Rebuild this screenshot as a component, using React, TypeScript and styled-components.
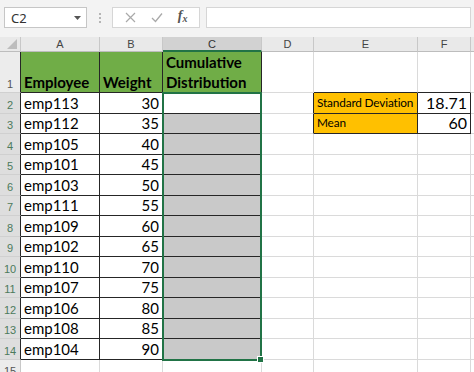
import React from 'react';
import styled, { createGlobalStyle } from 'styled-components';

const Global = createGlobalStyle`
  html, body { margin: 0; padding: 0; background: #fff; overflow: hidden; }
  #root { width: 474px; height: 372px; }
`;

const Page = styled.div`
  width: 474px;
  height: 372px;
  overflow: hidden;
  display: flex;
  flex-direction: column;
  background: #fff;
`;

const Toolbar = styled.div`
  height: 37px;
  flex: none;
  box-sizing: border-box;
  background: #f3f3f3;
  display: flex;
  align-items: flex-start;
  padding: 7px 3px 0 4px;
`;

const NameBox = styled.div`
  width: 83px;
  height: 21px;
  box-sizing: border-box;
  border: 1px solid #c6c6c6;
  background: #fff;
  display: flex;
  align-items: center;
  justify-content: space-between;
  padding: 0 5px 0 6px;
  font: 13px "Noto Sans", "DejaVu Sans", sans-serif;
  color: #333;
`;

const Grip = styled.div`
  width: 25px;
  height: 21px;
  display: flex;
  flex-direction: column;
  align-items: center;
  justify-content: center;
  gap: 2px;
  & > span {
    width: 2px;
    height: 2px;
    background: #b5b5b5;
  }
`;

const FxBox = styled.div`
  width: 88px;
  height: 21px;
  box-sizing: border-box;
  border: 1px solid #d6d6d6;
  background: #fff;
  display: flex;
  align-items: center;
  justify-content: space-around;
  padding: 0 4px;
`;

const FxLabel = styled.span`
  font: italic 600 14px "Liberation Serif", serif;
  color: #555;
  line-height: 14px;
  & > sub {
    font-size: 10px;
    vertical-align: -2px;
  }
`;

const FormulaInput = styled.div`
  flex: 1;
  height: 21px;
  margin-left: 6px;
  box-sizing: border-box;
  border: 1px solid #d6d6d6;
  background: #fff;
`;

const Sheet = styled.div`
  display: grid;
  grid-template-columns: 21px 79px 63px 99px 52px 104px 53px 1fr;
  grid-template-rows: 15px 41px repeat(14, 20.5px);
`;

type Pos = { $r: number; $c: number };

const Placed = styled.div<Pos>`
  grid-row: ${p => p.$r};
  grid-column: ${p => p.$c};
  box-sizing: border-box;
  min-width: 0;
`;

const Corner = styled(Placed)`
  background: #e9e9e9;
  border-right: 1px solid #c8c8c8;
  border-bottom: 1px solid #bdbdbd;
  display: flex;
  align-items: flex-end;
  justify-content: flex-end;
  padding: 0 3px 2px 0;
`;

const ColHead = styled(Placed)<{ $active?: boolean; $last?: boolean }>`
  background: ${p => (p.$active ? '#d2d2d2' : '#e9e9e9')};
  border-right: 1px solid ${p => (p.$last ? 'transparent' : '#c8c8c8')};
  border-bottom: ${p => (p.$active ? '2px solid #217346' : '1px solid #bdbdbd')};
  display: flex;
  align-items: center;
  justify-content: center;
  font: 11px "Liberation Sans", Arial, sans-serif;
  color: ${p => (p.$active ? '#333' : '#444')};
`;

const RowHead = styled(Placed)<{ $active?: boolean; $rb: string }>`
  background: ${p => (p.$active ? '#dedede' : '#ececec')};
  border-right: 1px solid ${p => p.$rb};
  border-bottom: 1px solid #d0d0d0;
  display: flex;
  align-items: flex-end;
  justify-content: center;
  padding-bottom: 2px;
  font: 11px "Liberation Sans", Arial, sans-serif;
  color: ${p => (p.$active ? '#4c7a5c' : '#555')};
`;

const Cell = styled(Placed)<{
  $fill: string;
  $rb: string;
  $bb: string;
  $align: 'left' | 'right';
  $bold?: boolean;
  $size: number;
}>`
  overflow: hidden;
  background: ${p => p.$fill};
  border-right: 1px solid ${p => p.$rb};
  border-bottom: 1px solid ${p => p.$bb};
  display: flex;
  align-items: flex-end;
  justify-content: ${p => (p.$align === 'right' ? 'flex-end' : 'flex-start')};
  padding: 0 3px 0 3px;
  font-family: Lato, "Liberation Sans", sans-serif;
  font-weight: ${p => (p.$bold ? 700 : 400)};
  font-size: ${p => p.$size}px;
  letter-spacing: ${p => (p.$size < 13 ? '-0.15px' : '0')};
  line-height: 20px;
  color: #000;
  white-space: nowrap;
`;

const Wrapped = styled.span`
  white-space: normal;
  line-height: 20px;
`;

const Selection = styled.div`
  grid-column: 4 / 5;
  grid-row: 3 / 16;
  margin: -1px 0 -1px -1px;
  border: 2px solid #217346;
  box-sizing: border-box;
  position: relative;
  pointer-events: none;
`;

const FillHandle = styled.div`
  position: absolute;
  right: -4px;
  bottom: -4px;
  width: 5px;
  height: 5px;
  background: #217346;
  border: 1px solid #fff;
`;

const data: [string, number][] = [
  ['emp113', 30],
  ['emp112', 35],
  ['emp105', 40],
  ['emp101', 45],
  ['emp103', 50],
  ['emp111', 55],
  ['emp109', 60],
  ['emp102', 65],
  ['emp110', 70],
  ['emp107', 75],
  ['emp106', 80],
  ['emp108', 85],
  ['emp104', 90],
];

const COLS = ['A', 'B', 'C', 'D', 'E', 'F', ''];
const DARK = '#262626';
const GRID = '#dadada';

const bordered = (r: number, c: number) =>
  (r >= 1 && r <= 14 && c >= 1 && c <= 3) || (r >= 2 && r <= 3 && c >= 5 && c <= 6);

type Content = { text: React.ReactNode; align: 'left' | 'right'; bold?: boolean; size: number };

const contentOf = (r: number, c: number): Content | null => {
  if (r === 1) {
    if (c === 1) return { text: 'Employee', align: 'left', bold: true, size: 15 };
    if (c === 2) return { text: 'Weight', align: 'left', bold: true, size: 15 };
    if (c === 3)
      return { text: <Wrapped>Cumulative Distribution</Wrapped>, align: 'left', bold: true, size: 15 };
  }
  if (r >= 2 && r <= 14) {
    const row = data[r - 2];
    if (c === 1) return { text: row[0], align: 'left', size: 15 };
    if (c === 2) return { text: row[1], align: 'right', size: 15 };
  }
  if (r === 2 && c === 5) return { text: 'Standard Deviation', align: 'left', size: 11.8 };
  if (r === 2 && c === 6) return { text: '18.71', align: 'right', size: 16 };
  if (r === 3 && c === 5) return { text: 'Mean', align: 'left', size: 11.8 };
  if (r === 3 && c === 6) return { text: '60', align: 'right', size: 16 };
  return null;
};

const fillOf = (r: number, c: number) => {
  if (r === 1 && c >= 1 && c <= 3) return '#70ad47';
  if (r >= 3 && r <= 14 && c === 3) return '#c9c9c9';
  if (r >= 2 && r <= 3 && c === 5) return '#ffc000';
  return '#fff';
};

const CornerMark = () => (
  <svg width="10" height="10" viewBox="0 0 10 10">
    <path d="M10 0 L10 10 L0 10 Z" fill="#bdbdbd" />
  </svg>
);

const CrossIcon = () => (
  <svg width="11" height="11" viewBox="0 0 11 11">
    <path d="M1 1 L10 10 M10 1 L1 10" stroke="#a9a9a9" strokeWidth="1.2" fill="none" />
  </svg>
);

const CheckIcon = () => (
  <svg width="12" height="11" viewBox="0 0 12 11">
    <path d="M1 6 L4.5 9.5 L11 1.5" stroke="#a9a9a9" strokeWidth="1.3" fill="none" />
  </svg>
);

const Caret = () => (
  <svg width="7" height="4" viewBox="0 0 7 4">
    <path d="M0 0 L7 0 L3.5 4 Z" fill="#555" />
  </svg>
);

export default function App() {
  const cells: React.ReactNode[] = [];
  cells.push(
    <Corner key="corner" $r={1} $c={1}>
      <CornerMark />
    </Corner>
  );
  COLS.forEach((name, i) => {
    cells.push(
      <ColHead key={`h${i}`} $r={1} $c={i + 2} $active={name === 'C'} $last={i === COLS.length - 1}>
        {name}
      </ColHead>
    );
  });
  for (let r = 1; r <= 15; r++) {
    cells.push(
      <RowHead
        key={`r${r}`}
        $r={r + 1}
        $c={1}
        $active={r >= 2 && r <= 14}
        $rb={bordered(r, 1) ? DARK : '#c8c8c8'}
      >
        {r}
      </RowHead>
    );
    for (let c = 1; c <= 7; c++) {
      const content = contentOf(r, c);
      const rb = c === 7 ? 'transparent' : bordered(r, c) || bordered(r, c + 1) ? DARK : GRID;
      const bb = bordered(r, c) || bordered(r + 1, c) ? DARK : GRID;
      cells.push(
        <Cell
          key={`c${r}-${c}`}
          $r={r + 1}
          $c={c + 1}
          $fill={fillOf(r, c)}
          $rb={rb}
          $bb={bb}
          $align={content?.align ?? 'left'}
          $bold={content?.bold}
          $size={content?.size ?? 15}
        >
          {content?.text}
        </Cell>
      );
    }
  }

  return (
    <Page>
      <Global />
      <Toolbar>
        <NameBox>
          <span>C2</span>
          <Caret />
        </NameBox>
        <Grip>
          <span />
          <span />
          <span />
        </Grip>
        <FxBox>
          <CrossIcon />
          <CheckIcon />
          <FxLabel>
            f<sub>x</sub>
          </FxLabel>
        </FxBox>
        <FormulaInput />
      </Toolbar>
      <Sheet>
        {cells}
        <Selection>
          <FillHandle />
        </Selection>
      </Sheet>
    </Page>
  );
}
